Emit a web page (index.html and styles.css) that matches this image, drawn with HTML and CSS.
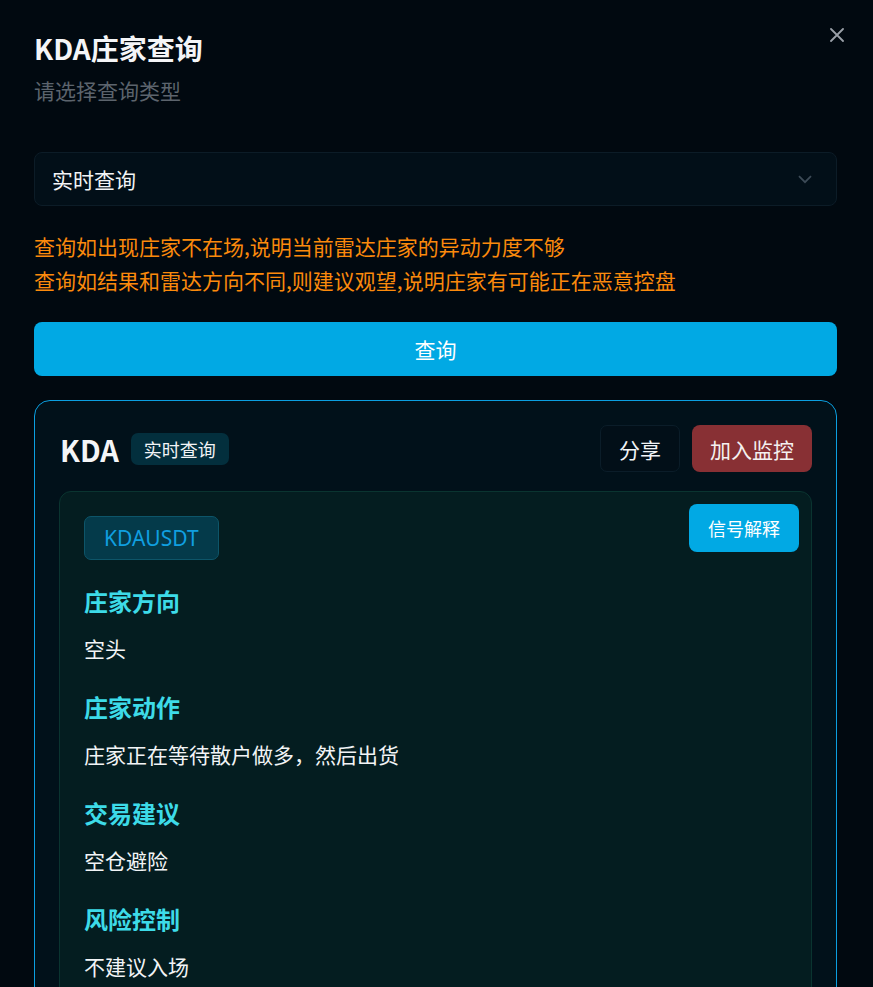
FILE: index.html
```html
<!DOCTYPE html>
<html lang="zh-CN">
<head>
<meta charset="utf-8">
<title>KDA庄家查询</title>
<link rel="stylesheet" href="styles.css">
</head>
<body>
<div class="dialog">
  <button class="close" aria-label="关闭">
    <svg width="14" height="14" viewBox="0 0 14 14"><path d="M1 1L13 13M13 1L1 13" stroke="#9aa0a8" stroke-width="1.8" stroke-linecap="round"/></svg>
  </button>
  <h1 class="title">KDA庄家查询</h1>
  <p class="subtitle">请选择查询类型</p>

  <div class="select">
    <span>实时查询</span>
    <svg class="chev" width="14" height="9" viewBox="0 0 14 9"><path d="M1 1.2L7 7.2L13 1.2" fill="none" stroke="#3c4a56" stroke-width="1.8"/></svg>
  </div>

  <div class="notice">
    <p>查询如出现庄家不在场,说明当前雷达庄家的异动力度不够</p>
    <p>查询如结果和雷达方向不同,则建议观望,说明庄家有可能正在恶意控盘</p>
  </div>

  <button class="query">查询</button>

  <div class="card">
    <div class="card-head">
      <div class="head-left">
        <span class="coin">KDA</span>
        <span class="badge">实时查询</span>
      </div>
      <div class="head-right">
        <button class="btn-share">分享</button>
        <button class="btn-monitor">加入监控</button>
      </div>
    </div>
    <div class="inner">
      <div class="inner-top">
        <span class="pair">KDAUSDT</span>
        <button class="btn-signal">信号解释</button>
      </div>
      <div class="section">
        <h3>庄家方向</h3>
        <p>空头</p>
      </div>
      <div class="section">
        <h3>庄家动作</h3>
        <p>庄家正在等待散户做多，然后出货</p>
      </div>
      <div class="section">
        <h3>交易建议</h3>
        <p>空仓避险</p>
      </div>
      <div class="section">
        <h3>风险控制</h3>
        <p>不建议入场</p>
      </div>
    </div>
  </div>
</div>
</body>
</html>
```

FILE: styles.css
```css
* { box-sizing: border-box; }
html, body {
  margin: 0;
  padding: 0;
  background: #010910;
}
body {
  font-family: "Noto Sans CJK SC", "Noto Sans", sans-serif;
  color: #f2f4f6;
}
button {
  font-family: inherit;
  border: none;
  cursor: pointer;
}
.dialog {
  position: relative;
  padding: 30px 36px 40px 34px;
}
.close {
  position: absolute;
  top: 28px;
  right: 29px;
  width: 14px;
  height: 14px;
  padding: 0;
  background: transparent;
  display: flex;
}
.title {
  margin: 0;
  font-size: 28px;
  line-height: 36px;
  font-weight: 700;
  color: #f4f5f7;
}
.subtitle {
  margin: 9px 0 0;
  font-size: 21px;
  line-height: 30px;
  color: #5c646d;
}
.select {
  margin-top: 47px;
  height: 54px;
  border: 1px solid #0c1c27;
  border-radius: 8px;
  background: #020f18;
  display: flex;
  align-items: center;
  justify-content: space-between;
  padding: 0 24px 0 17px;
  font-size: 21px;
  color: #f2f4f6;
}
.notice {
  margin-top: 23px;
}
.notice p {
  margin: 0;
  font-size: 21px;
  line-height: 34px;
  color: #fb8a0c;
  white-space: nowrap;
}
.query {
  display: block;
  width: 100%;
  margin-top: 25px;
  height: 54px;
  border-radius: 8px;
  background: #01a9e4;
  color: #fff;
  font-size: 21px;
}
.card {
  margin-top: 24px;
  border: 1px solid #0b9fe0;
  border-radius: 16px;
  background: #01111a;
  padding: 24px 24px 30px 24px;
}
.card-head {
  display: flex;
  align-items: center;
  justify-content: space-between;
}
.head-left {
  display: flex;
  align-items: center;
  gap: 12px;
  padding-left: 1px;
}
.coin {
  font-size: 29px;
  font-weight: 700;
  line-height: 36px;
  color: #f4f5f7;
}
.badge {
  background: #032f3d;
  border-radius: 7px;
  padding: 4px 13px;
  font-size: 18px;
  line-height: 24px;
  color: #f2f4f6;
}
.head-right {
  display: flex;
  gap: 12px;
}
.btn-share {
  height: 47px;
  padding: 0 18px;
  border-radius: 7px;
  background: #020f18;
  border: 1px solid #0b1d29;
  color: #f2f4f6;
  font-size: 21px;
}
.btn-monitor {
  height: 47px;
  padding: 0 18px;
  border-radius: 8px;
  background: #883034;
  color: #f4f0f0;
  font-size: 21px;
}
.inner {
  margin-top: 19px;
  border: 1px solid #0a3430;
  border-radius: 12px;
  background: #041d20;
  padding: 24px 12px 20px 24px;
}
.inner-top {
  display: flex;
  justify-content: space-between;
  align-items: flex-start;
  height: 44px;
}
.pair {
  border: 1px solid #0d5569;
  background: #043a4a;
  border-radius: 7px;
  color: #109fe0;
  font-size: 21px;
  line-height: 42px;
  height: 44px;
  padding: 0 19px;
  font-family: "Noto Sans", "Open Sans", sans-serif;
}
.btn-signal {
  margin-top: -12px;
  height: 48px;
  padding: 0 19px;
  border-radius: 8px;
  background: #01a9e4;
  color: #fff;
  font-size: 18px;
}
.section {
  margin-top: 23px;
}
.section + .section {
  margin-top: 25.5px;
}
.section h3 {
  margin: 0;
  font-size: 24px;
  line-height: 36px;
  font-weight: 700;
  color: #3ddbe8;
}
.section p {
  margin: 12.5px 0 0;
  font-size: 21px;
  line-height: 32px;
  color: #f2f4f6;
}
```
